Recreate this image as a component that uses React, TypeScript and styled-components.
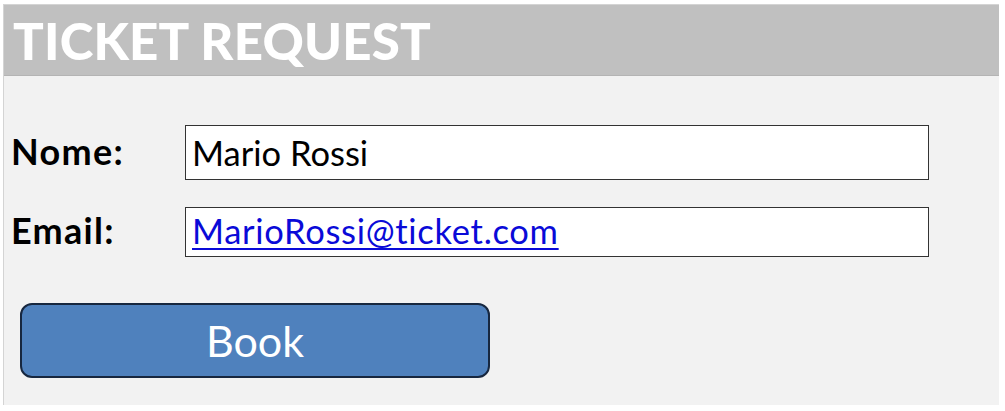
import { FC } from 'react';
import styled, { createGlobalStyle } from 'styled-components';

const GlobalStyle = createGlobalStyle`
  html, body {
    margin: 0;
    padding: 0;
    background: #ffffff;
  }
  body {
    font-family: Lato, 'Liberation Sans', sans-serif;
  }
`;

const Sheet = styled.div`
  width: 1005px;
  height: 411px;
  box-sizing: border-box;
  padding: 4px 0 0 3px;
  overflow: hidden;
`;

const Panel = styled.div`
  width: 995px;
  height: 400px;
  border-top: 1px solid #d4d4d4;
  border-left: 1px solid #d4d4d4;
  background: #f2f2f2;
  display: flex;
  flex-direction: column;
`;

const Header = styled.div`
  height: 70px;
  background: #c0c0c0;
  border-bottom: 1px solid #b4b4b4;
  display: flex;
  align-items: center;
  padding-left: 9px;
`;

const Title = styled.h1`
  margin: 0;
  font-family: Lato, 'Liberation Sans', sans-serif;
  font-weight: 900;
  font-size: 51px;
  line-height: 1;
  color: #ffffff;
  letter-spacing: 0.2px;
`;

const Form = styled.div`
  display: flex;
  flex-direction: column;
  padding: 49px 0 0 7px;
`;

const Field = styled.div<{ $height: number; $gap: number }>`
  display: grid;
  grid-template-columns: 174px 744px;
  align-items: center;
  height: ${({ $height }) => $height}px;
  margin-bottom: ${({ $gap }) => $gap}px;
`;

const Label = styled.label<{ $shift: number }>`
  font-weight: 700;
  font-size: 36px;
  letter-spacing: 1.3px;
  color: #000000;
  position: relative;
  top: ${({ $shift }) => $shift}px;
`;

const Box = styled.div`
  height: 100%;
  box-sizing: border-box;
  border: 1px solid #333333;
  background: #ffffff;
  display: flex;
  align-items: center;
  padding-left: 6px;
  font-size: 34.5px;
  color: #000000;
`;

const Link = styled.a`
  color: #0a0ad8;
  letter-spacing: 0.7px;
  margin-top: -3px;
  text-decoration: underline;
  text-decoration-thickness: 2px;
  text-underline-offset: 4px;
`;

const BookButton = styled.button`
  margin: 0 0 0 9px;
  width: 470px;
  height: 75px;
  border: 2px solid #17273f;
  border-radius: 12px;
  background: #4f81bd;
  color: #ffffff;
  font-family: Lato, 'Liberation Sans', sans-serif;
  font-size: 43px;
  font-weight: 400;
  display: flex;
  align-items: center;
  justify-content: center;
  padding: 0;
  cursor: pointer;
`;

const App: FC = () => {
  return (
    <>
      <GlobalStyle />
      <Sheet>
        <Panel>
          <Header>
            <Title>TICKET REQUEST</Title>
          </Header>
          <Form>
            <Field $height={55} $gap={27}>
              <Label $shift={-2}>Nome:</Label>
              <Box>Mario Rossi</Box>
            </Field>
            <Field $height={50} $gap={46}>
              <Label $shift={-2}>Email:</Label>
              <Box>
                <Link href='mailto:MarioRossi@ticket.com'>MarioRossi@ticket.com</Link>
              </Box>
            </Field>
            <BookButton>Book</BookButton>
          </Form>
        </Panel>
      </Sheet>
    </>
  );
};

export default App;
